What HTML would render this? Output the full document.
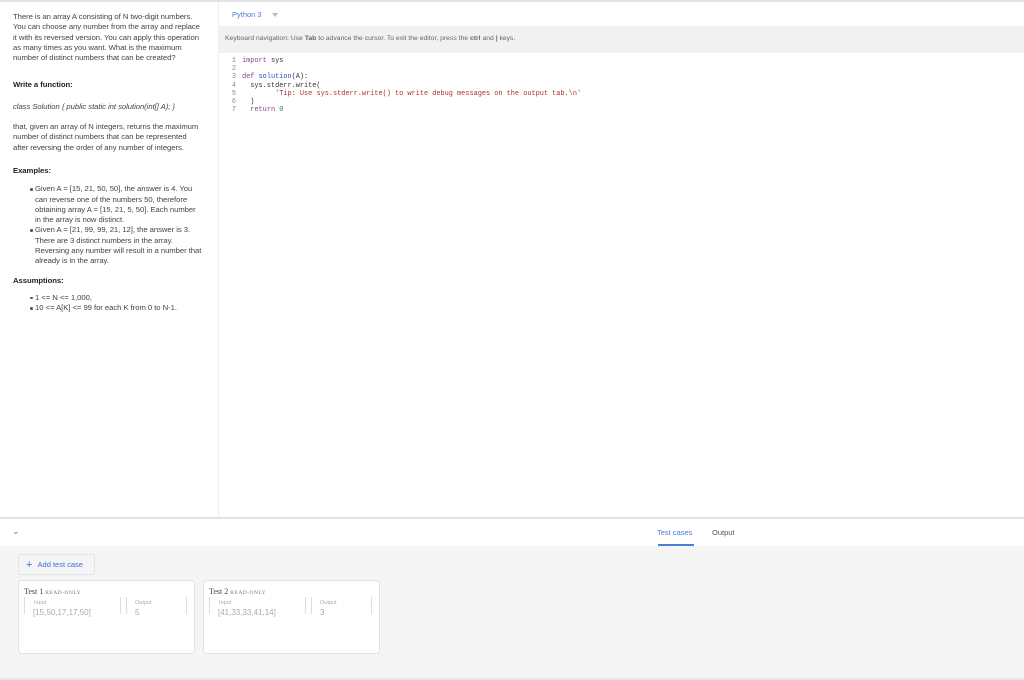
<!DOCTYPE html>
<html><head><style>
body{margin:0;width:1024px;height:680px;position:relative;overflow:hidden;background:#fff;font-family:"Liberation Sans",sans-serif;color:#333}
.a{position:absolute}
.left{left:13px;top:12px;width:190px;font-size:7.7px;line-height:10.3px;color:#444;letter-spacing:-0.05px}
.left p{margin:0}
.left b{color:#222}
.left ul{margin:0;padding-left:22px;width:168px;list-style:none}
.left li{position:relative}
.left li:before{content:"";position:absolute;left:-5px;top:4px;width:2.5px;height:2.5px;border-radius:50%;background:#555}
.code{font-family:"Liberation Mono",monospace;font-size:6.9px;line-height:8.2px;white-space:pre}
</style></head><body>
<div class="a" style="left:0;top:0;width:1024px;height:2px;background:#e4e4e4"></div>
<div class="a" style="left:218px;top:2px;width:1px;height:515px;background:#eee"></div>
<div class="left a">
<p>There is an array A consisting of N two-digit numbers. You can choose any number from the array and replace it with its reversed version. You can apply this operation as many times as you want. What is the maximum number of distinct numbers that can be created?</p>
<p style="margin-top:17px"><b>Write a function:</b></p>
<p style="margin-top:11px;font-style:italic">class Solution { public static int solution(int[] A); }</p>
<p style="margin-top:10px">that, given an array of N integers, returns the maximum number of distinct numbers that can be represented after reversing the order of any number of integers.</p>
<p style="margin-top:13px"><b>Examples:</b></p>
<ul style="margin-top:8px"><li>Given A = [15, 21, 50, 50], the answer is 4. You can reverse one of the numbers 50, therefore obtaining array A = [15, 21, 5, 50]. Each number in the array is now distinct.</li>
<li>Given A = [21, 99, 99, 21, 12], the answer is 3. There are 3 distinct numbers in the array. Reversing any number will result in a number that already is in the array.</li></ul>
<p style="margin-top:9px"><b>Assumptions:</b></p>
<ul style="margin-top:7px"><li>1 &lt;= N &lt;= 1,000,</li><li>10 &lt;= A[K] &lt;= 99 for each K from 0 to N-1.</li></ul>
</div>
<div class="a" style="left:232px;top:10px;font-size:7.5px;color:#4a7fd8">Python 3</div>
<div class="a" style="left:272px;top:13px;width:0;height:0;border-left:3px solid transparent;border-right:3px solid transparent;border-top:4px solid #bbb"></div>
<div class="a" style="left:219px;top:26px;width:805px;height:27px;background:#f1f1f1"></div>
<div class="a" style="left:225px;top:35px;font-size:6.8px;color:#666">Keyboard navigation: Use <b>Tab</b> to advance the cursor. To exit the editor, press the <b>ctrl</b> and <b>|</b> keys.</div>
<div class="a code" style="left:228px;top:57px;color:#888;text-align:right;width:8px">1
2
3
4
5
6
7</div>
<div class="a code" style="left:242px;top:57px;color:#333"><span style="color:#8a3a9a">import</span> sys

<span style="color:#8a3a9a">def</span> <span style="color:#3050c0">solution</span>(A):
  sys.stderr.write(
        <span style="color:#b03030">'Tip: Use sys.stderr.write() to write debug messages on the output tab.\n'</span>
  )
  <span style="color:#8a3a9a">return</span> <span style="color:#2a8a50">0</span></div>
<div class="a" style="left:0;top:517px;width:1024px;height:2px;background:#e2e2e2"></div>
<div class="a" style="left:12px;top:526px;font-size:9px;color:#777">&#8964;</div>
<div class="a" style="left:657px;top:528px;font-size:7.5px;color:#4a7fd8">Test cases</div>
<div class="a" style="left:658px;top:544px;width:36px;height:1.5px;background:#4a7fd8"></div>
<div class="a" style="left:712px;top:528px;font-size:7.5px;color:#555">Output</div>
<div class="a" style="left:0;top:546px;width:1024px;height:134px;background:#f5f5f5"></div>
<div class="a" style="left:18px;top:554px;width:75px;height:19px;border:1px solid #e4e4e4;border-radius:2px;font-size:7.5px;color:#3a6fd8;line-height:19px"><span style="font-size:11px;margin-left:7px;vertical-align:-1px">+</span> <span style="margin-left:3px">Add test case</span></div>
<div class="a" style="left:18px;top:580px;width:175px;height:72px;background:#fff;border:1px solid #e2e2e2;border-radius:4px"></div>
<div class="a" style="left:203px;top:580px;width:175px;height:72px;background:#fff;border:1px solid #e2e2e2;border-radius:4px"></div>
<div class="a" style="left:24px;top:587px;font-family:'Liberation Serif',serif;font-size:8px;color:#444">Test 1 <span style="font-size:5.5px;letter-spacing:.5px;color:#777">READ-ONLY</span></div>
<div class="a" style="left:209px;top:587px;font-family:'Liberation Serif',serif;font-size:8px;color:#444">Test 2 <span style="font-size:5.5px;letter-spacing:.5px;color:#777">READ-ONLY</span></div>
<div class="a" style="left:24px;top:597px;width:95px;height:17px;border-left:1px solid #ddd;border-right:1px solid #ddd"></div>
<div class="a" style="left:126px;top:597px;width:59px;height:17px;border-left:1px solid #ddd;border-right:1px solid #ddd"></div>
<div class="a" style="left:209px;top:597px;width:95px;height:17px;border-left:1px solid #ddd;border-right:1px solid #ddd"></div>
<div class="a" style="left:311px;top:597px;width:59px;height:17px;border-left:1px solid #ddd;border-right:1px solid #ddd"></div>
<div class="a" style="left:34px;top:600px;font-size:5.5px;color:#aaa">Input</div>
<div class="a" style="left:135px;top:600px;font-size:5.5px;color:#aaa">Output</div>
<div class="a" style="left:219px;top:600px;font-size:5.5px;color:#aaa">Input</div>
<div class="a" style="left:320px;top:600px;font-size:5.5px;color:#aaa">Output</div>
<div class="a" style="left:33px;top:608px;font-size:8px;color:#aaa">[15,50,17,17,50]</div>
<div class="a" style="left:135px;top:608px;font-size:8px;color:#aaa">5</div>
<div class="a" style="left:218px;top:608px;font-size:8px;color:#aaa">[41,33,33,41,14]</div>
<div class="a" style="left:320px;top:608px;font-size:8px;color:#aaa">3</div>
<div class="a" style="left:0;top:678px;width:1024px;height:2px;background:#e6e6e6"></div>
</body></html>
